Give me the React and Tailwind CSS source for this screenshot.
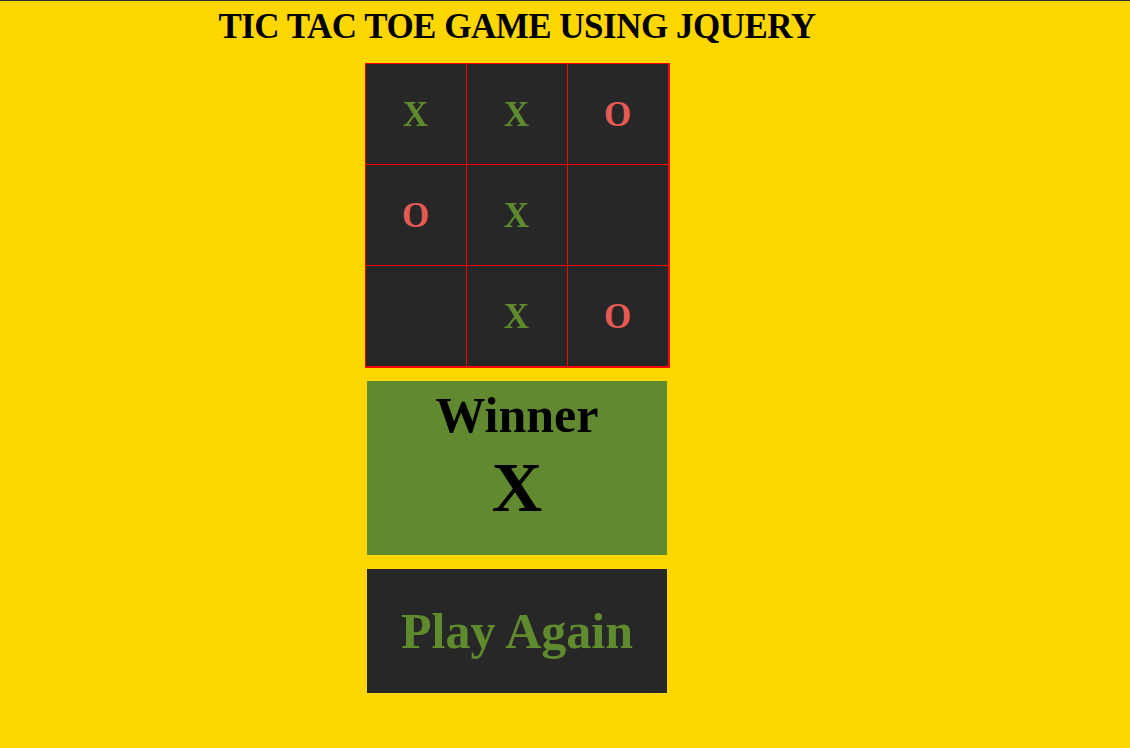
import React from 'react';

const board = ['X', 'X', 'O', 'O', 'X', '', '', 'X', 'O'];

const Cell = ({ value }) => (
  <div className="w-[100px] h-[100px] bg-[#272727] flex items-center justify-center">
    {value && (
      <span
        className={`text-[35px] font-bold leading-none ${value === 'X' ? 'text-[#5f8a2e]' : 'text-[#e55a52]'}`}
      >
        {value}
      </span>
    )}
  </div>
);

export default function App() {
  return (
    <div className="min-h-screen w-full bg-[#ffd700] border-t border-[#2a2a33] [font-family:'Liberation_Serif',serif]">
      <div className="w-[1034px] flex flex-col items-center">
        <h1 className="mt-[2px] h-[60px] text-[35px] font-bold leading-[48px] text-black tracking-[-0.5px]">
          TIC TAC TOE GAME USING JQUERY
        </h1>

        {/* board */}
        <div className="grid grid-cols-3 gap-px bg-[#ff0000] pl-px pt-px pr-[2px] pb-[2px]">
          {board.map((v, i) => (
            <Cell key={i} value={v} />
          ))}
        </div>

        {/* winner */}
        <div className="mt-[13px] w-[300px] h-[174px] bg-[#618a30] flex flex-col items-center text-black">
          <div className="mt-[4px] text-[50px] font-bold leading-[60px]">Winner</div>
          <div className="mt-[3px] text-[70px] font-bold leading-[80px]">X</div>
        </div>

        {/* play again */}
        <button className="mt-[14px] w-[300px] h-[124px] bg-[#272727] flex items-center justify-center text-[50px] font-bold text-[#5f8a2e]">
          Play Again
        </button>
      </div>
    </div>
  );
}
